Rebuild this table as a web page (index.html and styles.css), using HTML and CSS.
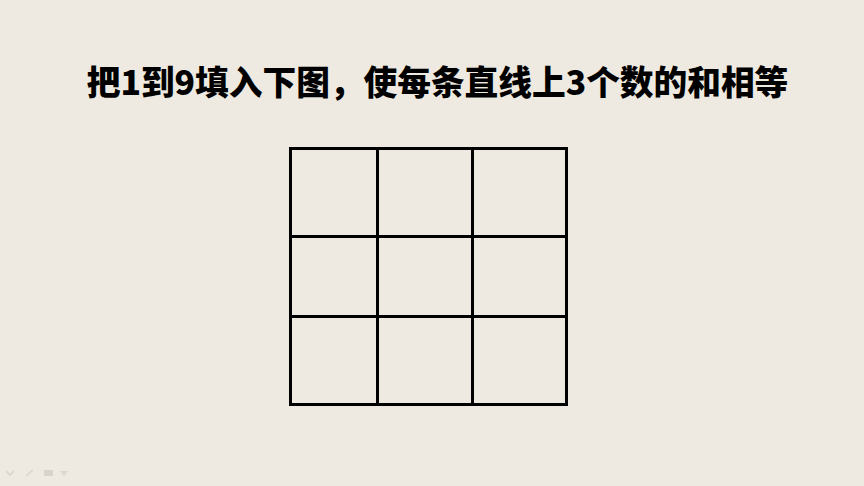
FILE: index.html
```html
<!DOCTYPE html>
<html lang="zh">
<head>
<meta charset="utf-8">
<link rel="stylesheet" href="styles.css">
</head>
<body>
<div class="slide">
  <h1 class="title">把1到9填入下图，使每条直线上3个数的和相等</h1>
  <div class="grid">
    <div class="cell"></div><div class="cell"></div><div class="cell"></div>
    <div class="cell"></div><div class="cell"></div><div class="cell"></div>
    <div class="cell"></div><div class="cell"></div><div class="cell"></div>
  </div>
  <div class="controls">
    <svg width="70" height="10" viewBox="0 0 70 10">
      <path d="M4 3 L8 7 L12 3" stroke="#d8d4ca" stroke-width="1.5" fill="none"/>
      <path d="M24 8 L31 2" stroke="#d8d4ca" stroke-width="1.5"/>
      <rect x="42" y="2" width="9" height="6" fill="#d8d4ca"/>
      <path d="M58 3 L66 3 L62 8 Z" fill="#dcd8ce"/>
    </svg>
  </div>
</div>
</body>
</html>
```
FILE: styles.css
```css
html, body {
  margin: 0;
  padding: 0;
  background: #eeeae1;
}
.slide {
  width: 864px;
  height: 486px;
  position: relative;
  display: flex;
  flex-direction: column;
  align-items: center;
  font-family: "Noto Sans CJK SC", "Noto Sans", sans-serif;
}
.title {
  margin: 58px 0 0 11px;
  font-size: 33.7px;
  font-weight: 900;
  line-height: 46px;
  color: #000;
  white-space: nowrap;
}
.grid {
  margin: 43px 0 0 -7px;
  display: grid;
  grid-template-columns: 84px 92px 91px;
  grid-template-rows: 85px 77px 85px;
  gap: 3px;
  padding: 3px;
  background: #000;
}
.cell {
  background: #eeeae1;
}
.controls {
  position: absolute;
  left: 2px;
  bottom: 3px;
}
```
